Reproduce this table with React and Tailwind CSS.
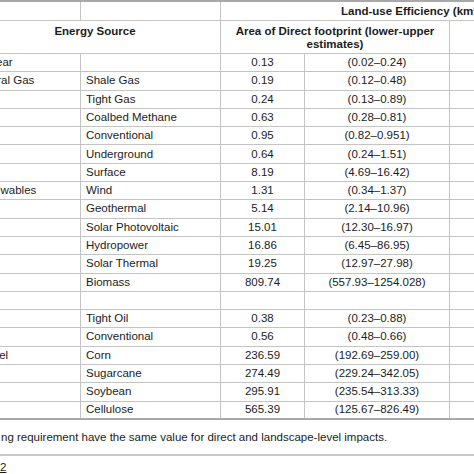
const rows = [
  ['Nuclear', '', '0.13', '(0.02–0.24)'],
  ['Natural Gas', 'Shale Gas', '0.19', '(0.12–0.48)'],
  ['', 'Tight Gas', '0.24', '(0.13–0.89)'],
  ['', 'Coalbed Methane', '0.63', '(0.28–0.81)'],
  ['', 'Conventional', '0.95', '(0.82–0.951)'],
  ['Coal', 'Underground', '0.64', '(0.24–1.51)'],
  ['', 'Surface', '8.19', '(4.69–16.42)'],
  ['Renewables', 'Wind', '1.31', '(0.34–1.37)'],
  ['', 'Geothermal', '5.14', '(2.14–10.96)'],
  ['', 'Solar Photovoltaic', '15.01', '(12.30–16.97)'],
  ['', 'Hydropower', '16.86', '(6.45–86.95)'],
  ['', 'Solar Thermal', '19.25', '(12.97–27.98)'],
  ['', 'Biomass', '809.74', '(557.93–1254.028)'],
  ['Oil', '', '', ''],
  ['', 'Tight Oil', '0.38', '(0.23–0.88)'],
  ['', 'Conventional', '0.56', '(0.48–0.66)'],
  ['Biofuel', 'Corn', '236.59', '(192.69–259.00)'],
  ['', 'Sugarcane', '274.49', '(229.24–342.05)'],
  ['', 'Soybean', '295.91', '(235.54–313.33)'],
  ['', 'Cellulose', '565.39', '(125.67–826.49)'],
]

export default function App() {
  return (
    <div className="w-[474px] h-[474px] overflow-hidden bg-white text-[#1c1c1c] text-[11.5px] font-['Liberation_Sans',Arial,sans-serif]">
      <div className="-ml-[30px] w-[700px]">
        {/* Spanning title row */}
        <div className="flex h-[21px] border-t-2 border-b border-t-[#a8a8a8] border-b-[#c4c4c4]">
          <div className="w-[110px]" />
          <div className="w-[140px] border-l border-[#c4c4c4]" />
          <div className="flex-1 border-l border-[#c4c4c4] pl-[120px] pt-[2px] font-bold leading-[14px] whitespace-nowrap">
            Land-use Efficiency (km²/TWh/yr)
          </div>
        </div>

        {/* Column headers */}
        <div className="flex h-[33px] border-b border-[#c4c4c4] font-bold leading-[13.3px]">
          <div className="w-[250px] text-center pt-[4px]">Energy Source</div>
          <div className="w-[229px] border-l border-[#c4c4c4] text-center pt-[4px]">
            Area of Direct footprint (lower-upper estimates)
          </div>
          <div className="w-[200px] border-l border-[#c4c4c4]" />
        </div>

        {/* Body */}
        {rows.map(([group, source, value, range], i) => (
          <div
            key={i}
            className={`flex items-stretch h-[18.3px] ${
              i === rows.length - 1 ? 'border-b-2 border-[#a8a8a8]' : 'border-b border-[#c4c4c4]'
            }`}
          >
            <div className="w-[110px] pl-[3px] flex items-center whitespace-nowrap">{group}</div>
            <div className="w-[140px] pl-[5px] border-l border-[#c4c4c4] flex items-center whitespace-nowrap">{source}</div>
            <div className="w-[84px] border-l border-[#c4c4c4] flex items-center justify-center">{value}</div>
            <div className="w-[145px] border-l border-[#c4c4c4] flex items-center justify-center whitespace-nowrap">{range}</div>
            <div className="w-[200px] border-l border-[#c4c4c4]" />
          </div>
        ))}
      </div>

      {/* Footnote */}
      <div className="pt-[10px] pb-[10px] pl-[1px] leading-[14px] whitespace-nowrap">
        ng requirement have the same value for direct and landscape-level impacts.
      </div>
      <div className="border-t-2 border-[#c8c8c8]" />
      <div className="pt-[4px] leading-[14px]">
        <span className="underline">2</span>
      </div>
    </div>
  )
}
